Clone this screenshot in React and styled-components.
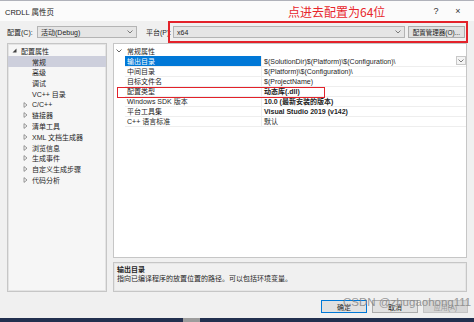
import React from 'react';
import styled, { createGlobalStyle } from 'styled-components';

const GlobalStyle = createGlobalStyle`
  html, body {
    margin: 0;
    padding: 0;
    background: #1f2b4c;
  }
  body {
    font-family: "Liberation Sans", "Noto Sans CJK SC", sans-serif;
  }
`;

const treeItems = [
  { label: '配置属性', level: 0, icon: 'open' },
  { label: '常规', level: 1, selected: true },
  { label: '高级', level: 1 },
  { label: '调试', level: 1 },
  { label: 'VC++ 目录', level: 1 },
  { label: 'C/C++', level: 1, icon: 'closed' },
  { label: '链接器', level: 1, icon: 'closed' },
  { label: '清单工具', level: 1, icon: 'closed' },
  { label: 'XML 文档生成器', level: 1, icon: 'closed' },
  { label: '浏览信息', level: 1, icon: 'closed' },
  { label: '生成事件', level: 1, icon: 'closed' },
  { label: '自定义生成步骤', level: 1, icon: 'closed' },
  { label: '代码分析', level: 1, icon: 'closed' },
];

const props = [
  { name: '输出目录', value: '$(SolutionDir)$(Platform)\\$(Configuration)\\', selected: true },
  { name: '中间目录', value: '$(Platform)\\$(Configuration)\\' },
  { name: '目标文件名', value: '$(ProjectName)' },
  { name: '配置类型', value: '动态库(.dll)', bold: true },
  { name: 'Windows SDK 版本', value: '10.0 (最新安装的版本)', bold: true },
  { name: '平台工具集', value: 'Visual Studio 2019 (v142)', bold: true },
  { name: 'C++ 语言标准', value: '默认' },
];

const Chevron = ({ color = '#606060' }) => (
  <svg width="6" height="4" viewBox="0 0 6 4">
    <polyline points="0.5,0.5 3,3 5.5,0.5" fill="none" stroke={color} strokeWidth="0.8" />
  </svg>
);

const TreeIcon = ({ type }) =>
  type === 'open' ? (
    <svg width="5" height="5" viewBox="0 0 5 5">
      <polygon points="4.5,0.5 4.5,4.5 0.5,4.5" fill="#404040" />
    </svg>
  ) : type === 'closed' ? (
    <svg width="5" height="6" viewBox="0 0 5 6">
      <polygon points="1,0.6 4,3 1,5.4" fill="none" stroke="#707070" strokeWidth="0.7" />
    </svg>
  ) : null;

export default function App() {
  return (
    <Window>
      <GlobalStyle />
      <TitleBar>
        <Title>CRDLL 属性页</Title>
        <Annotation>点进去配置为64位</Annotation>
        <TitleButton>?</TitleButton>
        <TitleButton>×</TitleButton>
      </TitleBar>

      <ConfigRow>
        <Label $width={30}>配置(C):</Label>
        <Select $width={100}>
          <span>活动(Debug)</span>
          <Chevron />
        </Select>
        <Label $width={22} $gap={9}>平台(P):</Label>
        <Highlight>
          <Select $width={232}>
            <span>x64</span>
            <Chevron />
          </Select>
          <Button $width={57}>配置管理器(O)...</Button>
        </Highlight>
      </ConfigRow>

      <Main>
        <Tree>
          {treeItems.map((item) => (
            <TreeRow key={item.label} $level={item.level} $selected={item.selected}>
              <TreeIconBox>
                <TreeIcon type={item.icon} />
              </TreeIconBox>
              {item.label}
            </TreeRow>
          ))}
        </Tree>

        <RightColumn>
          <Grid>
            <GroupHeader>
              <GroupChevron>
                <Chevron color="#404040" />
              </GroupChevron>
              常规属性
            </GroupHeader>
            {props.map((p) => (
              <PropRow key={p.name}>
                <Gutter />
                <NameCell $selected={p.selected}>{p.name}</NameCell>
                <ValueCell $bold={p.bold}>{p.value}</ValueCell>
                <DropCell>
                  {p.selected && (
                    <DropButton>
                      <Chevron />
                    </DropButton>
                  )}
                </DropCell>
              </PropRow>
            ))}
            <RowMark />
          </Grid>

          <Description>
            <DescTitle>输出目录</DescTitle>
            <DescText>指向已编译程序的放置位置的路径。可以包括环境变量。</DescText>
          </Description>
        </RightColumn>
      </Main>

      <Footer>
        <DialogButton $variant="primary">确定</DialogButton>
        <DialogButton>取消</DialogButton>
        <DialogButton $variant="disabled" $width={45}>应用(A)</DialogButton>
        <Watermark>CSDN @zhugaohong111</Watermark>
      </Footer>

      <Taskbar />
    </Window>
  );
}

const Window = styled.div`
  width: 474px;
  height: 322px;
  display: flex;
  flex-direction: column;
  background: #f0f0f0;
  position: relative;
  overflow: hidden;
  font-size: 7px;
  color: #1e1e1e;
`;

const TitleBar = styled.div`
  height: 21px;
  box-sizing: border-box;
  display: grid;
  grid-template-columns: 283px 1fr 22px 22px;
  align-items: center;
  padding: 0 5px 0 5px;
  background: #fbfbfb;
  border-top: 1px solid #b0b2ba;
`;

const Title = styled.div`
  font-size: 7.5px;
  color: #222;
`;

const Annotation = styled.div`
  font-family: "Noto Sans CJK SC", sans-serif;
  font-size: 12px;
  color: #e8262b;
  line-height: 1;
  margin-top: 2px;
`;

const TitleButton = styled.div`
  text-align: center;
  font-size: 9px;
  color: #333;
`;

const ConfigRow = styled.div`
  height: 22px;
  display: flex;
  align-items: center;
  padding-left: 7px;
`;

const Label = styled.div`
  width: ${(p) => p.$width}px;
  margin-left: ${(p) => p.$gap || 0}px;
  white-space: nowrap;
`;

const Select = styled.div`
  width: ${(p) => p.$width}px;
  height: 12px;
  box-sizing: border-box;
  display: flex;
  align-items: center;
  justify-content: space-between;
  padding: 0 3px 0 3px;
  background: #e5e5e5;
  border: 1px solid #b4b4b4;
`;

const Highlight = styled.div`
  width: 300px;
  height: 22px;
  box-sizing: border-box;
  display: flex;
  align-items: center;
  gap: 3px;
  padding-left: 3px;
  border: 2px solid #e3222a;
`;

const Button = styled.div`
  width: ${(p) => p.$width}px;
  height: 12px;
  box-sizing: border-box;
  display: flex;
  align-items: center;
  justify-content: center;
  background: #e1e1e1;
  border: 1px solid #adadad;
  font-size: 6.5px;
  white-space: nowrap;
`;

const Main = styled.div`
  height: 249px;
  display: flex;
  gap: 6px;
  padding-left: 7px;
`;

const Tree = styled.div`
  width: 100px;
  box-sizing: border-box;
  background: #f6f6f6;
  border: 1px solid #c6c6c6;
  box-shadow: inset 0 0 0 1px #e4e4e4;
  padding-top: 1.6px;
`;

const TreeRow = styled.div`
  height: 10.75px;
  display: flex;
  align-items: center;
  padding-left: ${(p) => (p.$level === 0 ? 4 : 15)}px;
  background: ${(p) => (p.$selected ? '#cdcfdc' : 'transparent')};
  white-space: nowrap;
`;

const TreeIconBox = styled.div`
  width: 9px;
  display: flex;
  align-items: center;
`;

const RightColumn = styled.div`
  width: 354px;
  display: flex;
  flex-direction: column;
  gap: 4px;
`;

const Grid = styled.div`
  height: 215px;
  box-sizing: border-box;
  background: #fff;
  border: 1px solid #c6c6c6;
  padding-top: 2px;
  position: relative;
`;

const GroupHeader = styled.div`
  height: 10px;
  display: flex;
  align-items: center;
  padding-left: 2px;
`;

const GroupChevron = styled.div`
  width: 11px;
  display: flex;
  align-items: center;
`;

const PropRow = styled.div`
  height: 10px;
  display: grid;
  grid-template-columns: 11px 137px 1fr 10px;
`;

const Gutter = styled.div``;

const NameCell = styled.div`
  display: flex;
  align-items: center;
  padding-left: 2px;
  border-bottom: 1px solid #eeeeee;
  border-right: 1px solid #eeeeee;
  background: ${(p) => (p.$selected ? '#0078d7' : 'transparent')};
  color: ${(p) => (p.$selected ? '#fff' : '#1e1e1e')};
  white-space: nowrap;
`;

const ValueCell = styled.div`
  display: flex;
  align-items: center;
  padding-left: 2px;
  border-bottom: 1px solid #eeeeee;
  font-weight: ${(p) => (p.$bold ? 700 : 400)};
  font-size: 7px;
  white-space: nowrap;
  overflow: hidden;
`;

const DropCell = styled.div`
  border-bottom: 1px solid #eeeeee;
`;

const DropButton = styled.div`
  height: 9px;
  box-sizing: border-box;
  display: flex;
  align-items: center;
  justify-content: center;
  border: 1px solid #c8c8c8;
  background: #f4f4f4;
`;

const RowMark = styled.div`
  position: absolute;
  left: 3px;
  top: 43px;
  width: 208px;
  height: 11px;
  box-sizing: border-box;
  border: 1.5px solid #e3222a;
`;

const Description = styled.div`
  height: 30px;
  box-sizing: border-box;
  background: #f0f0f0;
  border: 1px solid #c6c6c6;
  box-shadow: inset 0 0 0 1px #e6e6e6;
  padding: 2px 3px;
  line-height: 9px;
`;

const DescTitle = styled.div`
  font-weight: 700;
`;

const DescText = styled.div`
  font-size: 7px;
`;

const Footer = styled.div`
  height: 26px;
  box-sizing: border-box;
  display: flex;
  justify-content: flex-end;
  align-items: flex-start;
  gap: 5px;
  padding: 8px 6px 0 0;
  position: relative;
`;

const DialogButton = styled.div`
  width: ${(p) => p.$width || 46}px;
  height: 13px;
  box-sizing: border-box;
  display: flex;
  align-items: center;
  justify-content: center;
  background: ${(p) => (p.$variant === 'disabled' ? '#d6d6d6' : '#e1e1e1')};
  border: 1px solid
    ${(p) =>
      p.$variant === 'primary' ? '#0078d7' : p.$variant === 'disabled' ? '#c4c4c4' : '#adadad'};
  color: ${(p) => (p.$variant === 'disabled' ? '#9a9a9a' : '#1e1e1e')};
`;

const Watermark = styled.div`
  position: absolute;
  left: 343px;
  top: 4px;
  font-size: 11.5px;
  color: rgba(128, 128, 128, 0.8);
  white-space: nowrap;
`;

const Taskbar = styled.div`
  height: 4px;
  background: linear-gradient(
    to right,
    #22304f 0,
    #22304f 183px,
    #9c9c9c 183px,
    #9c9c9c 200px,
    #22304f 200px
  );
`;
